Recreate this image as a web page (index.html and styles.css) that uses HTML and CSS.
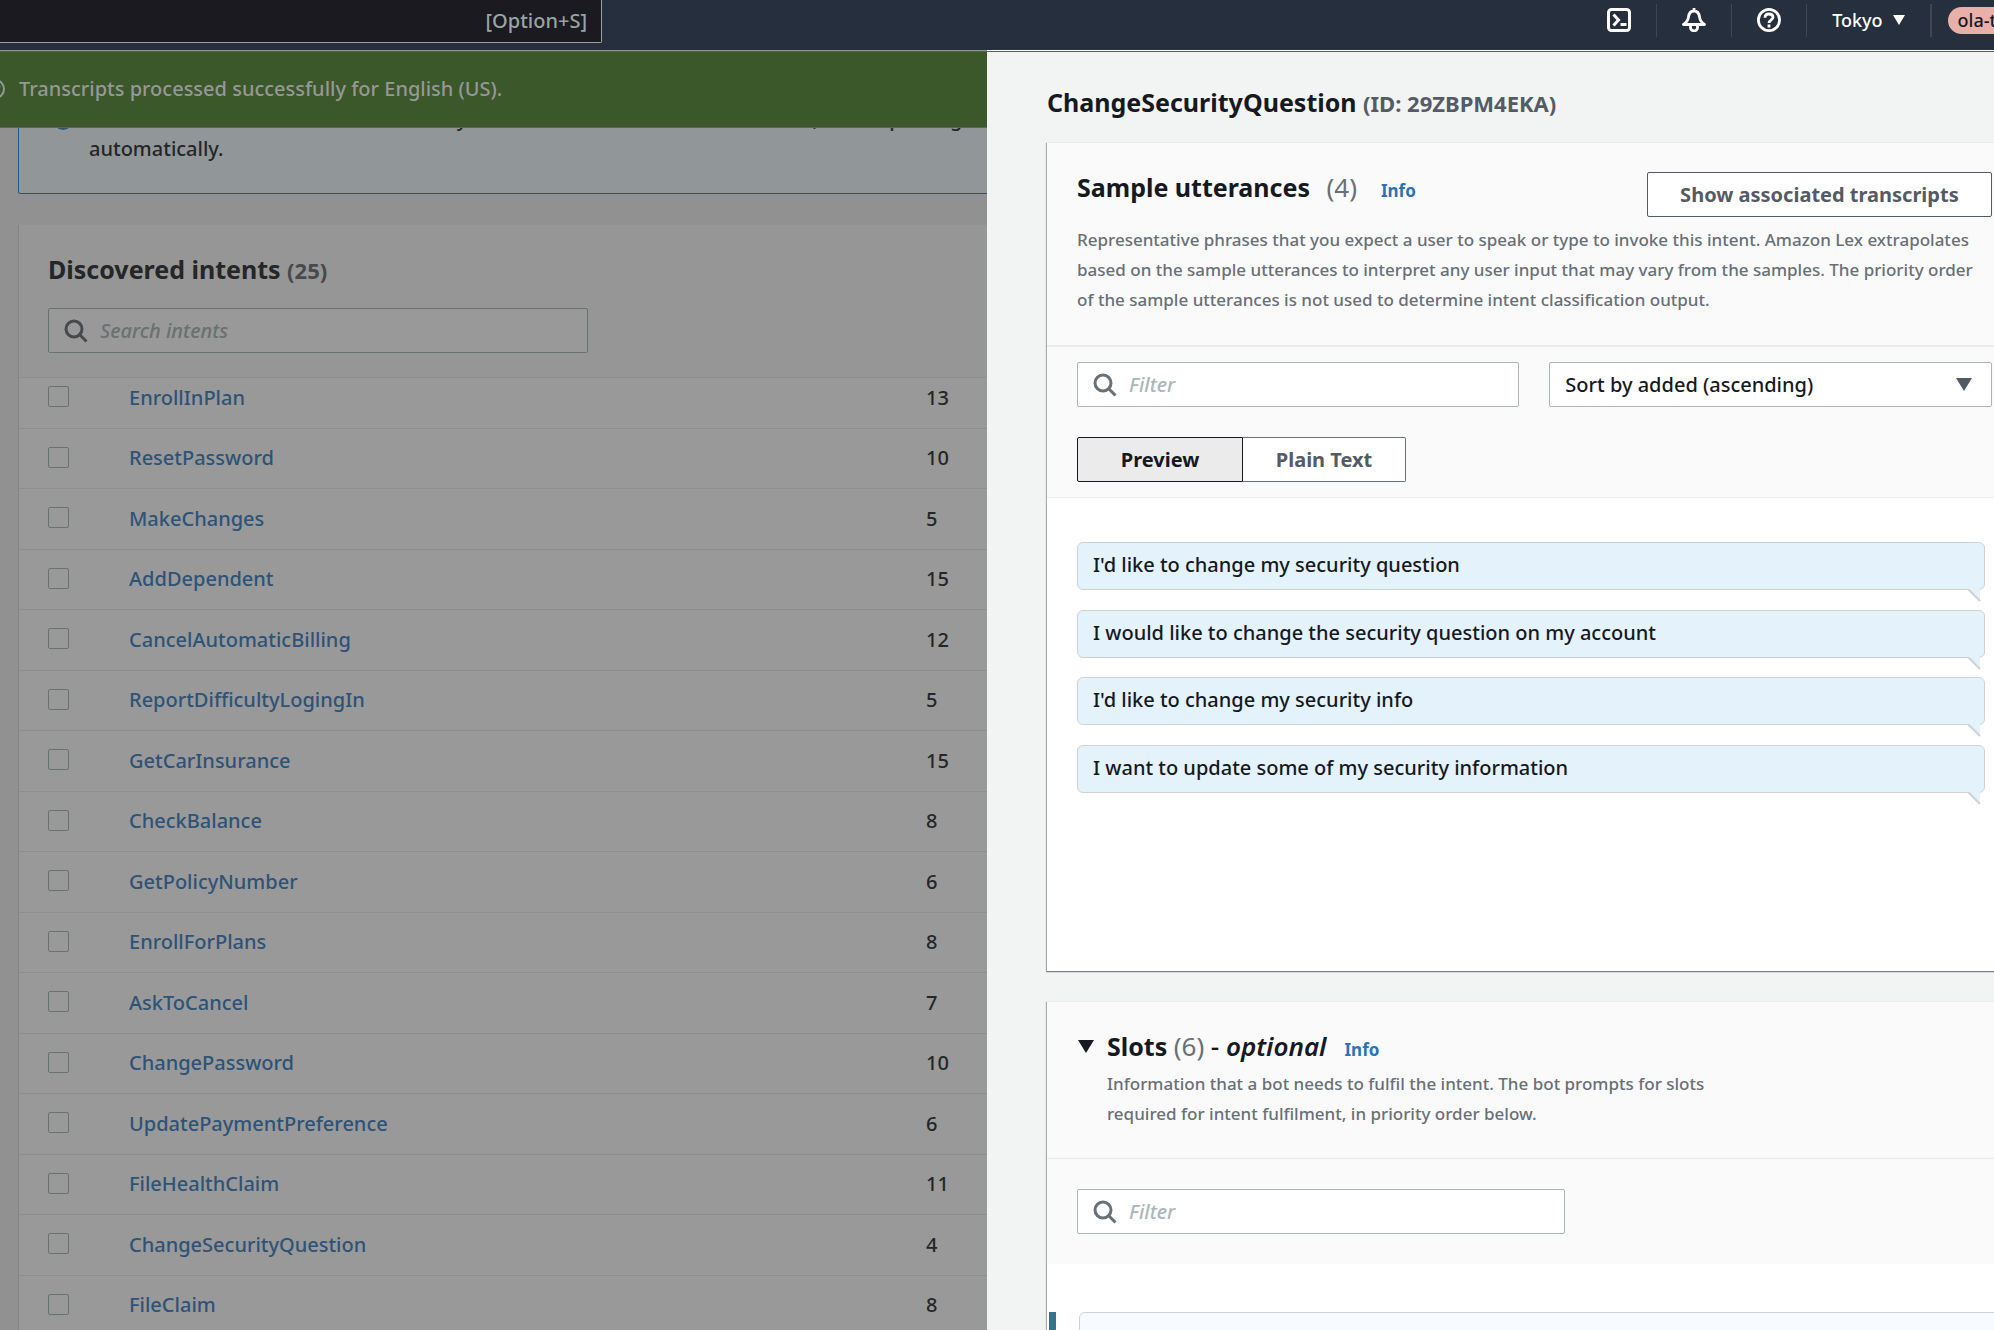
FILE: index.html
```html
<!DOCTYPE html>
<html lang="en">
<head>
    <meta charset="UTF-8">
    <meta name="viewport" content="width=device-width, initial-scale=1.0">
    <title>Discovered intents</title>
    <link rel="stylesheet" href="styles.css">
</head>
<body>
    <header class="topbar">
        <div class="topbar-search">
            <input type="text" aria-label="Search" placeholder="[Option+S]">
        </div>
        <nav class="topbar-nav">
            <button class="nav-item nav-icon" aria-label="CloudShell">
                <svg viewBox="0 0 24 24" width="24" height="24" fill="none" stroke="#fff" stroke-width="3"><rect x="1.5" y="1.5" width="21" height="21" rx="3"/><path d="M6.500 6.500l5 5.500l-5 5.500M13.500 16.500h6"/></svg>
            </button>
            <button class="nav-item nav-icon" aria-label="Notifications">
                <svg viewBox="0 0 24 24" width="24" height="24" fill="none" stroke="#fff" stroke-width="2.800" stroke-linejoin="round"><path d="M12 0v3M1.500 16.500h21c-3-2-4.500-4-5-7.500c-.5-4-2.500-6-5.500-6s-5 2-5.500 6c-.5 3.500-2 5.500-5 7.500zM8.500 17v2.500a3.500 3.500 0 0 0 7 0v-2.500"/></svg>
            </button>
            <button class="nav-item nav-icon" aria-label="Help">
                <svg viewBox="0 0 24 24" width="24" height="24" fill="none" stroke="#fff" stroke-width="2.800"><circle cx="12" cy="12" r="10.600"/><path d="M8 9.800c0-2.300 1.500-3.800 4-3.800s4 1.400 4 3.300c0 2.800-4 2.600-4 5.700M12 16.500v3"/></svg>
            </button>
            <button class="nav-item nav-region">Tokyo <svg viewBox="0 0 12 10" width="12" height="10"><path d="M0 0h12l-6 10z" fill="#fff"/></svg></button>
            <button class="nav-item nav-user"><span class="user-badge">ola-tokyo</span></button>
        </nav>
    </header>

    <div class="layout">
        <main class="page">
            <div class="flash">
                <svg class="flash-icon" viewBox="0 0 20 20" width="20" height="20" fill="none" stroke="#979797" stroke-width="2"><circle cx="10" cy="10" r="9"/><path d="M5 10l4 4l6-7"/></svg>
                <span>Transcripts processed successfully for English (US).</span>
            </div>
            <div class="alert">
                <svg viewBox="0 0 20 20" width="20" height="20"><circle cx="10" cy="10" r="10" fill="#2e5377"/></svg>
                <p>The intents below are all derived from your recorded conversations or chats, and improving<br>automatically.</p>
            </div>
            <section class="card intents">
                <div class="intents-header">
                    <h2>Discovered intents <span class="count">(25)</span></h2>
                    <div class="search">
                        <svg viewBox="0 0 24 24" width="24" height="24" fill="none" stroke="#46494d" stroke-width="3"><circle cx="10" cy="10" r="8"/><path d="M15.500 15.500l7 7"/></svg>
                        <input type="search" aria-label="Search intents" placeholder="Search intents">
                    </div>
                </div>
                <table class="intents-table">
                    <tbody>
                        <tr><td class="check"><input type="checkbox" aria-label="Select EnrollInPlan"></td><td><a href="#">EnrollInPlan</a></td><td class="num">13</td></tr>
                        <tr><td class="check"><input type="checkbox" aria-label="Select ResetPassword"></td><td><a href="#">ResetPassword</a></td><td class="num">10</td></tr>
                        <tr><td class="check"><input type="checkbox" aria-label="Select MakeChanges"></td><td><a href="#">MakeChanges</a></td><td class="num">5</td></tr>
                        <tr><td class="check"><input type="checkbox" aria-label="Select AddDependent"></td><td><a href="#">AddDependent</a></td><td class="num">15</td></tr>
                        <tr><td class="check"><input type="checkbox" aria-label="Select CancelAutomaticBilling"></td><td><a href="#">CancelAutomaticBilling</a></td><td class="num">12</td></tr>
                        <tr><td class="check"><input type="checkbox" aria-label="Select ReportDifficultyLogingIn"></td><td><a href="#">ReportDifficultyLogingIn</a></td><td class="num">5</td></tr>
                        <tr><td class="check"><input type="checkbox" aria-label="Select GetCarInsurance"></td><td><a href="#">GetCarInsurance</a></td><td class="num">15</td></tr>
                        <tr><td class="check"><input type="checkbox" aria-label="Select CheckBalance"></td><td><a href="#">CheckBalance</a></td><td class="num">8</td></tr>
                        <tr><td class="check"><input type="checkbox" aria-label="Select GetPolicyNumber"></td><td><a href="#">GetPolicyNumber</a></td><td class="num">6</td></tr>
                        <tr><td class="check"><input type="checkbox" aria-label="Select EnrollForPlans"></td><td><a href="#">EnrollForPlans</a></td><td class="num">8</td></tr>
                        <tr><td class="check"><input type="checkbox" aria-label="Select AskToCancel"></td><td><a href="#">AskToCancel</a></td><td class="num">7</td></tr>
                        <tr><td class="check"><input type="checkbox" aria-label="Select ChangePassword"></td><td><a href="#">ChangePassword</a></td><td class="num">10</td></tr>
                        <tr><td class="check"><input type="checkbox" aria-label="Select UpdatePaymentPreference"></td><td><a href="#">UpdatePaymentPreference</a></td><td class="num">6</td></tr>
                        <tr><td class="check"><input type="checkbox" aria-label="Select FileHealthClaim"></td><td><a href="#">FileHealthClaim</a></td><td class="num">11</td></tr>
                        <tr><td class="check"><input type="checkbox" aria-label="Select ChangeSecurityQuestion"></td><td><a href="#">ChangeSecurityQuestion</a></td><td class="num">4</td></tr>
                        <tr><td class="check"><input type="checkbox" aria-label="Select FileClaim"></td><td><a href="#">FileClaim</a></td><td class="num">8</td></tr>
                    </tbody>
                </table>
            </section>
        </main>

        <aside class="drawer">
            <div class="drawer-title">
                <h1>ChangeSecurityQuestion <span class="count">(ID: 29ZBPM4EKA)</span></h1>
                <button class="close" aria-label="Close"><svg viewBox="0 0 20 20" width="20" height="20" stroke="#687078" stroke-width="2"><path d="M1 1l18 18M19 1l-18 18"/></svg></button>
            </div>

            <section class="panel utterances">
                <div class="panel-header">
                    <div class="panel-heading">
                        <div class="heading-text">
                            <h2>Sample utterances <span class="light">(4)</span></h2>
                            <a class="info" href="#">Info</a>
                        </div>
                        <button class="btn">Show associated transcripts</button>
                    </div>
                    <p class="description">Representative phrases that you expect a user to speak or type to invoke this intent. Amazon Lex extrapolates<br>based on the sample utterances to interpret any user input that may vary from the samples. The priority order<br>of the sample utterances is not used to determine intent classification output.</p>
                </div>
                <div class="panel-tools">
                    <div class="tools-row">
                        <div class="search">
                            <svg viewBox="0 0 24 24" width="24" height="24" fill="none" stroke="#687078" stroke-width="3"><circle cx="10" cy="10" r="8"/><path d="M15.500 15.500l7 7"/></svg>
                            <input type="search" aria-label="Filter utterances" placeholder="Filter">
                        </div>
                        <div class="sort">
                            <select aria-label="Sort"><option>Sort by added (ascending)</option></select>
                            <svg viewBox="0 0 16 13" width="16" height="13"><path d="M0 0h16l-8 13z" fill="#545b64"/></svg>
                        </div>
                    </div>
                    <div class="segmented">
                        <button class="active">Preview</button><button>Plain Text</button>
                    </div>
                </div>
                <ul class="bubbles">
                    <li>I'd like to change my security question<svg viewBox="0 0 13 13" width="13" height="13"><path d="M0 0h12v12z" fill="#e4f2fc"/><path d="M0 0l12 12" stroke="#d0d3d4" stroke-width="2"/></svg></li>
                    <li>I would like to change the security question on my account<svg viewBox="0 0 13 13" width="13" height="13"><path d="M0 0h12v12z" fill="#e4f2fc"/><path d="M0 0l12 12" stroke="#d0d3d4" stroke-width="2"/></svg></li>
                    <li>I'd like to change my security info<svg viewBox="0 0 13 13" width="13" height="13"><path d="M0 0h12v12z" fill="#e4f2fc"/><path d="M0 0l12 12" stroke="#d0d3d4" stroke-width="2"/></svg></li>
                    <li>I want to update some of my security information<svg viewBox="0 0 13 13" width="13" height="13"><path d="M0 0h12v12z" fill="#e4f2fc"/><path d="M0 0l12 12" stroke="#d0d3d4" stroke-width="2"/></svg></li>
                </ul>
            </section>

            <section class="panel slots">
                <div class="slots-header">
                    <svg class="caret" viewBox="0 0 16 13" width="16" height="13"><path d="M0 0h16l-8 13z" fill="#16191f"/></svg>
                    <div>
                        <div class="heading-text">
                            <h2>Slots <span class="light">(6)</span> <span class="optional">- <i>optional</i></span></h2>
                            <a class="info" href="#">Info</a>
                        </div>
                        <p class="description">Information that a bot needs to fulfil the intent. The bot prompts for slots<br>required for intent fulfilment, in priority order below.</p>
                    </div>
                </div>
                <div class="slots-tools">
                    <div class="search">
                        <svg viewBox="0 0 24 24" width="24" height="24" fill="none" stroke="#687078" stroke-width="3"><circle cx="10" cy="10" r="8"/><path d="M15.500 15.500l7 7"/></svg>
                        <input type="search" aria-label="Filter slots" placeholder="Filter">
                    </div>
                </div>
                <div class="slots-list">
                    <div class="slot-item"></div>
                </div>
            </section>
        </aside>
    </div>
</body>
</html>
```

FILE: styles.css
```css
* {
    box-sizing: border-box;
}
body {
    margin: 0;
    height: 100vh;
    overflow: hidden;
    display: flex;
    flex-direction: column;
    font-family: "Noto Sans", sans-serif;
    font-size: 20px;
    font-weight: 500;
    line-height: 30px;
    color: #16191f;
    background-color: #f2f3f3;
}
h1, h2, p, ul {
    margin: 0;
    padding: 0;
}
h1, h2 {
    font-size: 25px;
    line-height: 36px;
    font-weight: 700;
}
button, input, select {
    font: inherit;
    color: inherit;
}
button {
    cursor: pointer;
}
a {
    color: #2b72b8;
    text-decoration: none;
}
svg {
    display: block;
    flex: none;
}
.count {
    font-size: 22px;
    color: #545b64;
}

/* top bar */
.topbar {
    display: flex;
    justify-content: space-between;
    height: 50px;
    flex: none;
    background-color: #262f3e;
    color: #fff;
}
.topbar-search {
    width: 602px;
    height: 43px;
}
.topbar-search input {
    width: 100%;
    height: 100%;
    padding: 0 14px 2px;
    text-align: right;
    border: 1px solid #95a5a6;
    border-width: 0 1px 1px 0;
    border-radius: 0 0 2px 0;
    background-color: #1a1a20;
}
.topbar-search input::placeholder {
    color: #95a5a6;
    opacity: 1;
}
.topbar-nav {
    display: flex;
    height: 33px;
    margin: 4px -54px 0 0;
}
.nav-item {
    display: flex;
    align-items: center;
    gap: 10px;
    padding: 0 25px 1px;
    border: none;
    border-left: 1px solid #414750;
    background: none;
    font-size: 18px;
}
.nav-item:first-child {
    border-left: none;
}
.nav-user {
    padding: 0 0 0 16px;
    border-left-width: 2px;
}
.user-badge {
    padding: 0 10px;
    line-height: 27px;
    border-radius: 14px;
    background-color: #e8b0a9;
    color: #16191f;
}

.layout {
    display: flex;
    flex: 1;
    min-height: 0;
}

/* dimmed page behind the drawer */
.page {
    flex: 0 0 49.5%;
    overflow: hidden;
    border-top: 1px solid #919191;
    background-color: #919191;
    color: #242628;
}
.page a {
    color: #2e5377;
}
.page .count {
    color: #46494d;
}
.flash {
    position: relative;
    z-index: 1;
    display: flex;
    align-items: center;
    gap: 14px;
    height: 77px;
    margin-left: -15px;
    padding-bottom: 2px;
    border-top: 1px solid #5b5c63;
    border-bottom: 1px solid #5c6163;
    background-color: #3a5829;
    color: #979797;
}
.alert {
    display: flex;
    gap: 16px;
    margin: -49px -40px 0 18px;
    padding: 24px 34px 29px;
    border: 1px solid #2e5377;
    border-radius: 2px;
    background-color: #919699;
    white-space: nowrap;
}
.alert svg {
    margin-top: 6px;
}
.card {
    margin: 31px 0 0 18px;
    border-left: 1px solid #848484;
    background-color: #999;
}
.intents-header {
    padding: 26px 30px 24px 29px;
    border-bottom: 1px solid #8d8e8e;
    background-color: #969696;
}
.search {
    position: relative;
    display: flex;
    align-items: center;
}
.search svg {
    position: absolute;
    left: 16px;
}
.search input {
    width: 100%;
    height: 45px;
    padding: 0 12px 0 51px;
    border: 1px solid #aab7b8;
    border-radius: 2px;
    background-color: #fff;
    appearance: none;
}
.search input::placeholder {
    color: #aab7b8;
    font-style: italic;
    opacity: 1;
}
.intents .search {
    width: 540px;
    margin-top: 20px;
}
.intents .search input {
    border-color: #6a7171;
    background-color: #999;
}
.intents .search input::placeholder {
    color: #6a7171;
}
.intents-table {
    width: 100%;
    border-collapse: collapse;
}
.intents-table td {
    height: 61px;
    padding: 0;
    border-bottom: 1px solid #8d8e8e;
}
.intents-table tr:nth-child(even) td {
    height: 60px;
}
.intents-table tr:first-child td {
    height: 50px;
    padding-bottom: 10px;
}
.intents-table .check {
    width: 110px;
    padding-left: 29px;
}
.intents-table .num {
    width: 61px;
}
.intents-table input {
    display: block;
    width: 21px;
    height: 21px;
    margin: 0 0 2px;
    border: 1px solid #6a7171;
    border-radius: 2px;
    appearance: none;
}

/* drawer */
.drawer {
    flex: 0 0 55%;
    padding: 0 62px 0 60px;
    border-top: 1px solid #fff;
    background-color: #f2f3f3;
    box-shadow: inset 0 1px #545b64;
}
.drawer-title {
    display: flex;
    justify-content: space-between;
    align-items: center;
    height: 91px;
    padding-top: 12px;
}
.close {
    padding: 4px;
    border: none;
    background: none;
}
.panel {
    margin-bottom: 30px;
    border-top: 1px solid #eaeded;
    background-color: #fff;
    box-shadow: 0 1px 1px #545b6499, -1px 1px 1px #545b6466;
}
.panel-header {
    padding: 26px 30px 30px;
    border-bottom: 2px solid #ebebeb;
    background-color: #fafafa;
}
.panel-heading {
    display: flex;
    justify-content: space-between;
    margin-bottom: 8px;
}
.heading-text {
    display: flex;
    align-items: baseline;
}
.light {
    font-size: 26px;
    font-weight: 400;
    color: #687078;
}
.utterances .light {
    margin-left: 10px;
}
.info {
    margin-left: 24px;
    font-size: 17px;
    font-weight: 700;
}
.btn {
    height: 45px;
    margin-top: 3px;
    padding: 0 32px;
    border: 1px solid #545b64;
    border-radius: 2px;
    background-color: #fff;
    color: #545b64;
    font-weight: 700;
}
.description {
    font-size: 17px;
    color: #687078;
    white-space: nowrap;
}
.panel-tools {
    padding: 15px 30px;
    border-bottom: 1px solid #ebebeb;
    background-color: #fafafa;
}
.tools-row {
    display: grid;
    grid-template-columns: 1fr 1fr;
    gap: 30px;
}
.sort {
    position: relative;
    display: flex;
    align-items: center;
}
.sort select {
    width: 100%;
    height: 45px;
    padding: 0 15px;
    border: 1px solid #aab7b8;
    border-radius: 2px;
    background-color: #fff;
    appearance: none;
}
.sort svg {
    position: absolute;
    right: 20px;
    pointer-events: none;
}
.segmented {
    display: flex;
    margin-top: 30px;
}
.segmented button {
    width: 163px;
    height: 45px;
    padding: 0;
    border: 1px solid #687078;
    border-left: none;
    border-radius: 0 2px 2px 0;
    background-color: #fff;
    color: #545b64;
    font-weight: 700;
}
.segmented .active {
    width: 166px;
    border: 1px solid #16191f;
    border-radius: 2px 0 0 2px;
    background-color: #ebebeb;
    color: #16191f;
}
.bubbles {
    min-height: 473px;
    padding: 44px 37px 0 30px;
    list-style: none;
}
.bubbles li {
    position: relative;
    height: 48px;
    margin-bottom: 20px;
    padding: 7px 15px;
    border: 1px solid #d0d3d4;
    border-radius: 6px;
    background-color: #e4f2fc;
}
.bubbles li:nth-child(even) {
    margin-bottom: 19px;
}
.bubbles svg {
    position: absolute;
    right: 3px;
    top: 46px;
}
.slots-header {
    display: flex;
    gap: 13px;
    padding: 26px 30px 29px 31px;
    border-bottom: 1px solid #ebebeb;
    background-color: #fafafa;
}
.slots-header .description {
    margin-top: 4px;
}
.caret {
    margin-top: 12px;
}
.slots .info {
    margin-left: 18px;
}
.optional {
    font-size: 26px;
    font-weight: 500;
}
.optional i {
    font-weight: 600;
}
.slots-tools {
    padding: 30px;
    background-color: #fafafa;
}
.slots-tools .search {
    width: 488px;
}
.slots-list {
    padding: 48px 0 0 2px;
}
.slot-item {
    height: 80px;
    border-left: 7px solid #34748a;
    padding-left: 23px;
}
.slot-item::before {
    content: "";
    display: block;
    height: 100%;
    border: 1px solid #d0d3d4;
    border-radius: 6px;
    background-color: #f7fbff;
}
```
